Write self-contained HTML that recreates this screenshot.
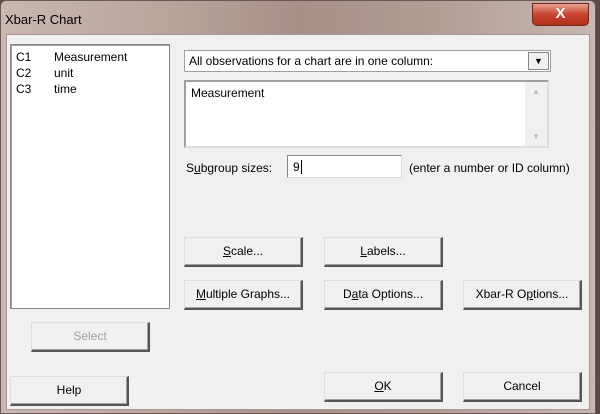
<!DOCTYPE html>
<html><head><style>
*{margin:0;padding:0;box-sizing:border-box}
body{width:600px;height:414px;overflow:hidden;background:#5a4a45;font-family:"Liberation Sans",sans-serif;font-size:12px;color:#000;position:relative}
.frame{position:absolute;left:0;top:0;width:596px;height:414px;background:linear-gradient(90deg,#c9b8b0 0%,#b8a29a 30%,#a88f88 50%,#b09a92 70%,#c7b7b0 100%);border:1px solid #6a5a55;border-radius:6px 6px 0 0}
.title{position:absolute;left:5px;top:12px;font-size:13px;color:#000}
.close{position:absolute;left:532px;top:3px;width:57px;height:23px;border-radius:0 0 5px 5px;background:linear-gradient(#e8a290,#c8452f 50%,#b0301c);border:1px solid #6b2a20;color:#fff;font-weight:bold;font-size:15px;text-align:center;line-height:20px}
.client{position:absolute;left:6px;top:34px;width:584px;height:376px;background:#f0f0f0;border:1px solid #a89690}
.a{position:absolute}
.list{left:10px;top:44px;width:160px;height:265px;background:#fff;border:1px solid #828790;box-shadow:inset 1px 1px 0 #a0a0a0}
.list div{position:absolute;left:5px;font-size:12px}
.list span{position:absolute;left:38px}
.dd{left:184px;top:50px;width:367px;height:22px;background:#fff;border:1px solid #a0a0a0;padding:3px 4px}
.ddb{left:528px;top:52px;width:21px;height:18px;background:#f0f0f0;border:1px solid #888;text-align:center;font-size:9px;line-height:17px}
.mb{left:184px;top:80px;width:365px;height:68px;background:#fff;border:2px solid #a0a0a0;border-right-color:#ddd;border-bottom-color:#ddd;padding:4px 5px}
.sb{left:525px;top:82px;width:22px;height:64px;background:#f0f0f0;color:#bbb;font-size:8px;text-align:center}
.btn{position:absolute;background:#f0f0f0;border:1px solid #ddd;border-right:2px solid #555;border-bottom:2px solid #555;box-shadow:inset -1px -1px 0 #a0a0a0;text-align:center;font-size:12px}
u{text-decoration:underline}
</style></head><body>
<div class="frame"></div>
<div class="title">Xbar-R Chart</div>
<div class="close">X</div>
<div class="client"></div>
<div class="a list">
<div style="top:5px">C1<span>Measurement</span></div>
<div style="top:21px">C2<span>unit</span></div>
<div style="top:37px">C3<span>time</span></div>
</div>
<div class="a dd">All observations for a chart are in one column:</div>
<div class="a ddb">▼</div>
<div class="a mb">Measurement</div>
<div class="a sb"><div style="margin-top:5px">▲</div><div style="margin-top:36px">▼</div></div>
<div class="a" style="left:186px;top:161px">S<u>u</u>bgroup sizes:</div>
<div class="a" style="left:287px;top:155px;width:115px;height:23px;background:#fff;border:1px solid #888;border-right-color:#ddd;border-bottom-color:#ddd;padding:4px 5px">9<span style="border-left:1px solid #000;margin-left:1px"></span></div>
<div class="a" style="left:409px;top:161px">(enter a number or ID column)</div>
<div class="btn" style="left:184px;top:237px;width:119px;height:30px;line-height:27px"><u>S</u>cale...</div>
<div class="btn" style="left:324px;top:237px;width:119px;height:30px;line-height:27px"><u>L</u>abels...</div>
<div class="btn" style="left:184px;top:280px;width:119px;height:30px;line-height:27px"><u>M</u>ultiple Graphs...</div>
<div class="btn" style="left:324px;top:280px;width:119px;height:30px;line-height:27px">D<u>a</u>ta Options...</div>
<div class="btn" style="left:463px;top:280px;width:119px;height:30px;line-height:27px">Xbar-R O<u>p</u>tions...</div>
<div class="btn" style="left:31px;top:322px;width:119px;height:30px;line-height:27px;color:#a0a0a0">Select</div>
<div class="btn" style="left:10px;top:376px;width:119px;height:30px;line-height:27px">Help</div>
<div class="btn" style="left:324px;top:372px;width:119px;height:30px;line-height:27px"><u>O</u>K</div>
<div class="btn" style="left:463px;top:372px;width:119px;height:30px;line-height:27px">Cancel</div>
</body></html>
